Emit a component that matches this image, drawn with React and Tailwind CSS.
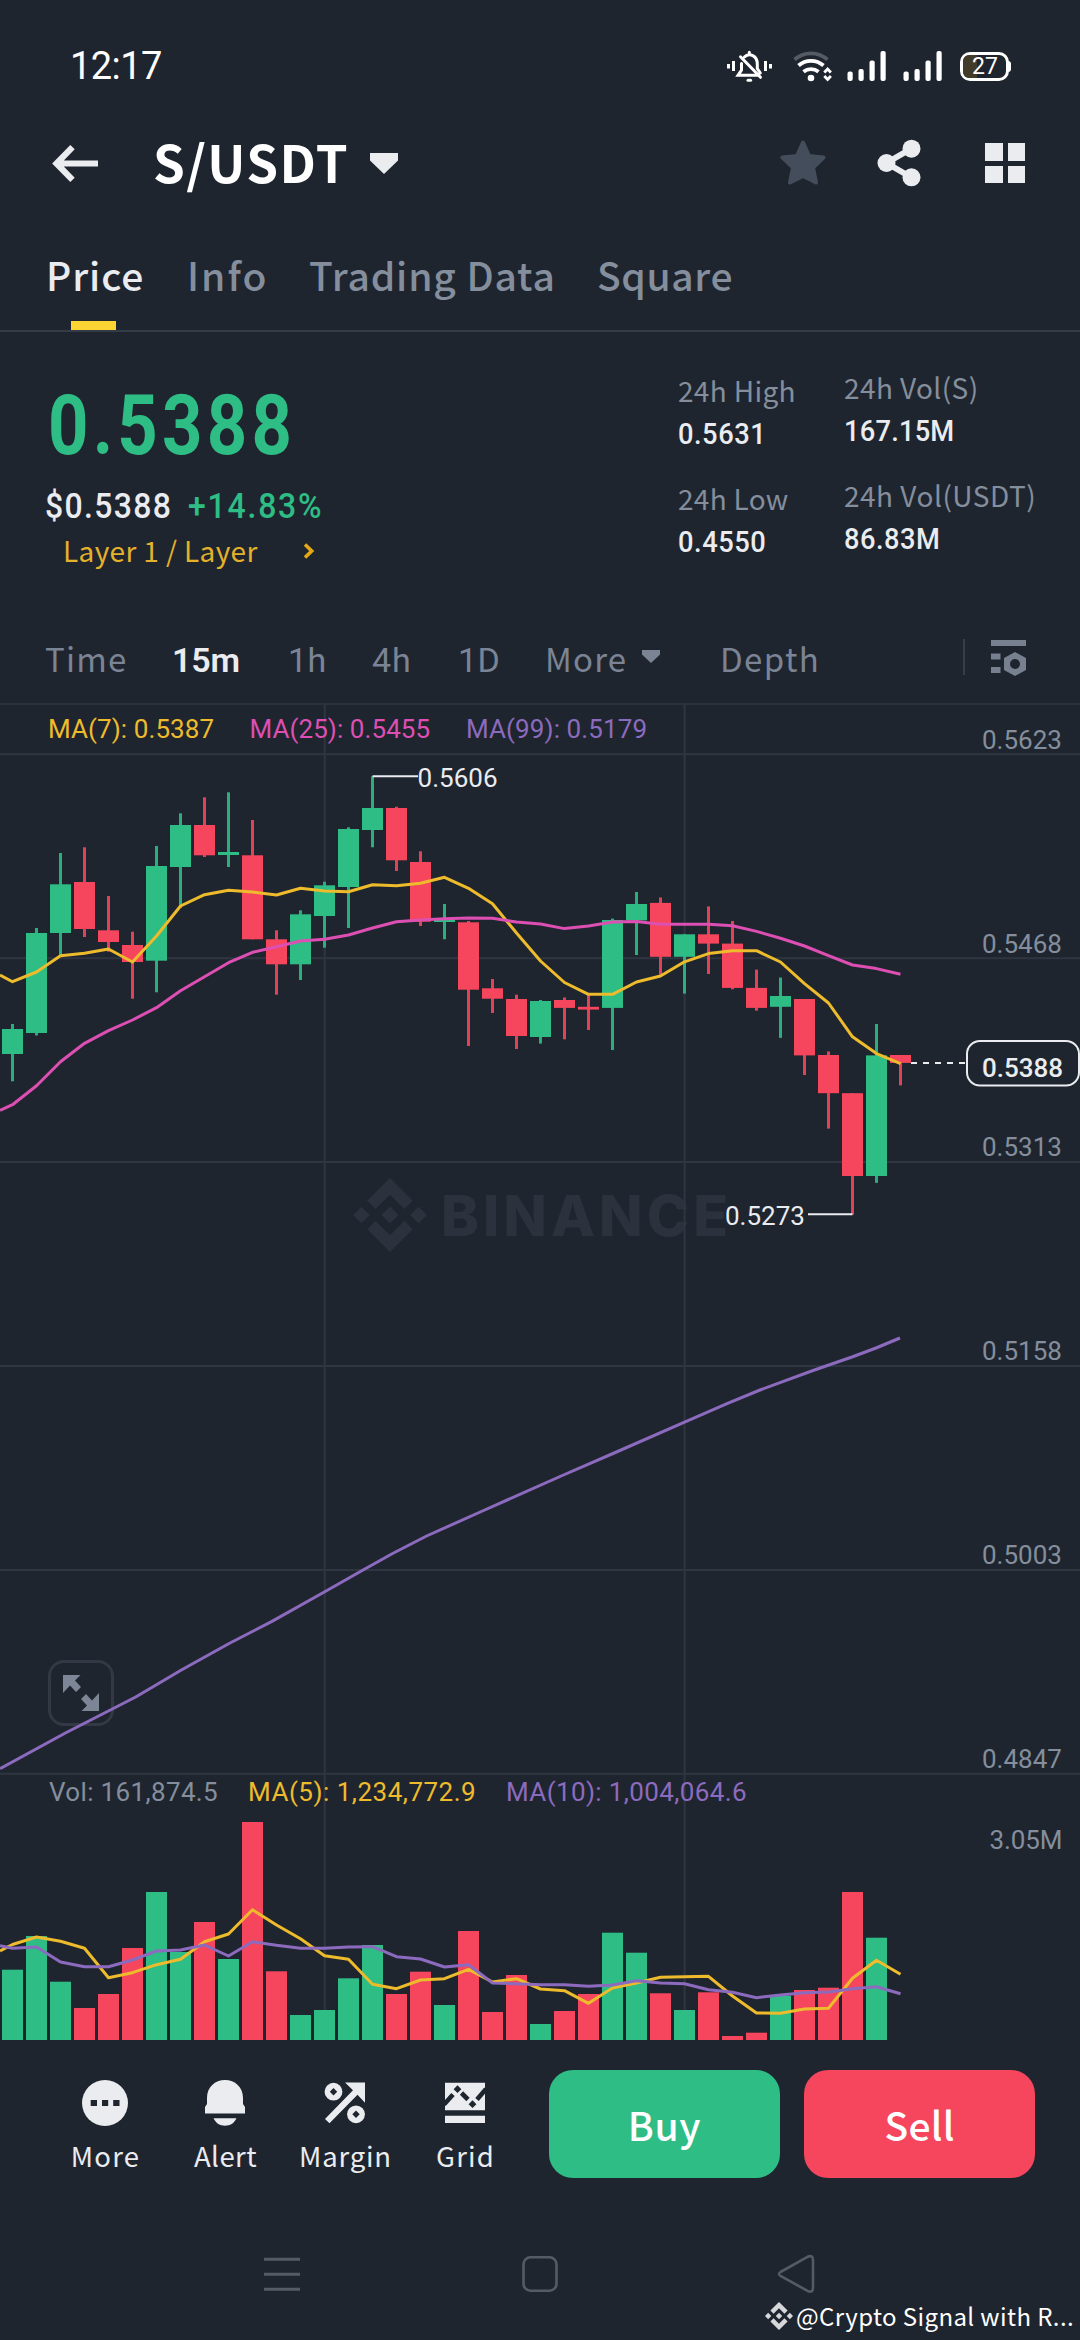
import React from "react";

const DIN = "font-['Roboto','Noto_Sans',sans-serif]";
const PLEX = "font-['Noto_Sans_CJK_SC','Noto_Sans',sans-serif]";

const UP = "#2ebd85";
const DOWN = "#f6465d";
const GOLD = "#eebb2c";
const PINK = "#dd4fb2";
const PURPLE = "#8c6bbf";

const STEP = 24;
const cx = (i) => 12.5 + STEP * i;

// [direction, body top, body bottom, wick top, wick bottom]
const candles = [
  [1, 1029, 1054, 1024, 1081.3], [1, 933, 1033, 928, 1035.5], [1, 884.3, 933, 853, 955.7], [0, 882, 929, 847.3, 937],
  [0, 930.3, 942, 896, 951.7], [0, 945, 962, 931.7, 998.7], [1, 866, 960.7, 846, 992.3], [1, 825, 867, 813.3, 908],
  [0, 825, 855.3, 797.3, 857], [1, 852, 855, 792.3, 867], [0, 855.3, 939.3, 820, 939.3], [0, 939.3, 964.3, 930.3, 994.7],
  [1, 914.3, 964.3, 910.3, 980], [1, 885.3, 916, 881.7, 947.7], [1, 829, 887, 827.3, 928], [1, 808, 830, 776.3, 847.3],
  [0, 808, 860.3, 806.7, 871], [0, 862, 921.7, 851.3, 926], [1, 919.7, 922, 904, 939.3], [0, 922.3, 989.7, 921, 1046],
  [0, 988.3, 998.7, 979, 1013], [0, 999, 1036, 994.7, 1049], [1, 1001, 1037, 1000, 1043.6], [0, 1000, 1007.9, 997.5, 1039.3],
  [0, 1006.8, 1009.6, 994.3, 1030], [1, 920, 1007.9, 918.6, 1050], [1, 904, 920.4, 892, 955], [0, 902.9, 956.8, 897.5, 974.6],
  [1, 934.3, 956.8, 934.3, 993.6], [0, 934.3, 943.6, 906.4, 974], [0, 943.6, 987.9, 921, 989.3], [0, 987.9, 1007.9, 969.6, 1010.7],
  [1, 996, 1006.8, 977.5, 1037.9], [0, 999, 1055.4, 999, 1075], [0, 1055, 1093.2, 1051.4, 1128.6], [0, 1093.2, 1176, 1093.2, 1214.6],
  [1, 1055.4, 1176, 1024, 1182.9], [0, 1055, 1062.9, 1055, 1085.4],
];

const volumes = [
  1969.7, 1936, 1981.7, 2008, 1994, 1948, 1892, 1952, 1922, 1959, 1822, 1971.3, 2015, 2010, 1978.3, 1945, 1994, 1971.7, 2005,
  1931, 2012, 1975, 2024, 2011, 1994, 1932.7, 1952.7, 1993.3, 2010, 1992.3, 2036, 2032.7, 1995.7, 1990, 1987.7, 1892, 1937.7,
];

const ma7 = [
  975, 981.7, 972, 955.7, 953.3, 949, 962, 936, 906, 894.7, 890.3, 892, 895, 888.3, 891, 891.7, 884.7, 885.7, 883.3, 877.3,
  888.3, 903.7, 933, 961, 982.5, 994.3, 994.3, 982, 976, 961.8, 953.6, 950.7, 950.7, 962, 983.6, 1003, 1036.8, 1053.6, 1063.6,
];
const ma25 = [
  1110.3, 1104.7, 1085.7, 1061.7, 1043.3, 1030.7, 1020, 1007.7, 990.7, 976.7, 962.7, 952.3, 946.7, 941, 939.3, 935, 928,
  921.7, 920, 918.7, 918, 918.3, 922, 924, 928.6, 926, 922, 921.4, 924.3, 924.3, 924.3, 925.7, 931.4, 938.2, 946, 955.7, 965,
  968.6, 974.3,
];
const vol5 = [
  1951, 1944.5, 1937, 1941.3, 1948.3, 1977.7, 1972.7, 1964.7, 1959.3, 1941.7, 1934, 1909.7, 1925, 1938.7, 1955.7, 1959.3,
  1984.3, 1988.7, 1980, 1978.7, 1969.3, 1982, 1978.7, 1989, 1990.7, 2003.3, 1988, 1983, 1977.3, 1976.7, 1976.3, 1996, 2013,
  2013.3, 2009, 2008.3, 1978.3, 1960.3, 1974.3,
];
const vol10 = [
  1945.7, 1948.3, 1947, 1962, 1966.7, 1966.7, 1960, 1951, 1950, 1945, 1956, 1941.7, 1945.3, 1948.3, 1948.3, 1947, 1946.7,
  1956.7, 1959, 1967, 1964.7, 1983, 1983.7, 1984.7, 1984.7, 1986.3, 1985, 1980.7, 1983, 1983.7, 1989.7, 1992.3, 1997.7, 1995,
  1992.7, 1992, 1988.7, 1986.7, 1993.7,
];
const ma99 =
  "0,1768.6 65.4,1733 135.7,1697 181.8,1669.8 230,1643 271.5,1621.6 324.3,1592 363.5,1569.8 392.6,1553.5 426.6,1536 484.7,1510 562.3,1475.5 613,1453.5 684,1422.4 727,1403.7 760,1390 813,1370.5 852,1357 876,1348 900,1338";

// The first value sits on the left edge; the rest sit on candle centres.
const toPoints = (values) => values.map((y, i) => `${i === 0 ? 0 : cx(i - 1)},${y}`).join(" ");

const gridRows = [
  [754.3, "0.5623"], [958.2, "0.5468"], [1162.1, "0.5313"], [1366, "0.5158"], [1570, "0.5003"], [1773.8, "0.4847"],
];

function Line({ points, color }) {
  return <polyline points={points} fill="none" stroke={color} strokeWidth="3" strokeLinejoin="round" />;
}

function BinanceMark({ className, fill }) {
  return (
    <svg viewBox="0 0 126.6 126.6" className={className} fill={fill} preserveAspectRatio="none">
      <path d="M38.7 53.2l24.6-24.6 24.6 24.6 14.3-14.3L63.3 0 24.4 38.9zM0 63.3l14.3-14.3 14.3 14.3-14.3 14.3zM38.7 73.4l24.6 24.6 24.6-24.6 14.3 14.3-38.9 38.9-38.9-38.9zM98 63.3l14.3-14.3 14.3 14.3-14.3 14.3zM77.8 63.3L63.3 48.8 48.8 63.3l14.5 14.5z" />
    </svg>
  );
}

function SignalBars() {
  return (
    <svg viewBox="0 0 40 32" className="h-8 w-10" fill="#fff">
      <rect x="0.5" y="21.5" width="5.2" height="9.5" rx="2" />
      <rect x="11.5" y="19" width="5.2" height="12" rx="2" />
      <rect x="22.5" y="10.5" width="5.2" height="20.5" rx="2" />
      <rect x="33.5" y="1" width="5.2" height="30" rx="2" />
    </svg>
  );
}

function StatusBar() {
  return (
    <div className="flex h-[132px] items-center pl-[70px]">
      <span className={`${DIN} w-[657px] text-[38px] leading-10 tracking-[-0.57px] text-white`}>12:17</span>
      <svg viewBox="0 0 45 32" className="mr-5 h-8 w-[45px]" fill="none" stroke="#fff" strokeWidth="3" strokeLinecap="round">
        <path d="M1.5 14v4.500M6.500 11v10M43.500 14v4.500M38.500 11v10" strokeLinecap="butt" />
        <path d="M14.500 13.500v6.500L11 25.300h20M17.500 6.800C22.500 2.500 30.300 5.500 30.300 14v4.500l3 4.500M22.300 2.300v1.500M13.500 6.800l20 20.500" />
        <path d="M21 30.200h2.600" />
      </svg>
      <svg viewBox="0 0 41 32" className="mr-3.5 h-8 w-[41px]" fill="none" stroke="#fff" strokeWidth="3.8">
        <path d="M2.500 9.500a25 25 0 0 1 33 0" stroke="#555b64" />
        <path d="M6.500 15.500a19 19 0 0 1 25 0M11.500 21.800a12 12 0 0 1 15 0" />
        <circle cx="19" cy="28" r="3.300" fill="#fff" stroke="none" />
        <path d="M32.300 22.500l3.300-3.500 3.300 3.500M32.300 26l3.300 3.500 3.300-3.500" strokeWidth="2.800" />
      </svg>
      <SignalBars />
      <div className="ml-4"><SignalBars /></div>
      <div className="relative ml-[17px] h-[29px] w-[49px] rounded-[10px] border-[3px] border-white">
        <div className="h-full w-[14px] rounded-l-[6px] bg-[#423b2a]" />
        <span className={`${DIN} absolute -top-0.5 left-[9px] text-[23px] leading-[27px] text-white`}>27</span>
        <div className="absolute top-[6px] -right-[5px] h-[11px] w-[3px] rounded-r-sm bg-white" />
      </div>
    </div>
  );
}

function Header() {
  return (
    <div className="flex h-[62px] items-center pl-[52px]">
      <svg viewBox="0 0 46 37" className="h-[37px] w-[46px]" fill="none" stroke="#eaecef" strokeWidth="6.200">
        <path d="M46 18.500H4M20.500 2.200L4.500 18.500l16 16.300" />
      </svg>
      <span className={`${PLEX} -mt-1 ml-[55px] w-[217px] text-[51px] leading-[60px] font-bold tracking-[1.4px] text-white`}>
        S/USDT
      </span>
      <svg viewBox="0 0 28 21" className="h-[21px] w-7" fill="#eaecef">
        <path d="M0 0h28v7.500L14 21 0 7.500z" />
      </svg>
      <svg viewBox="0 0 46 46" className="ml-[382px] h-[46px] w-[46px]">
        <path
          d="M23 2.500l6 13.500 14.500 1.500L33 27.500l3 15L23 36l-13 6.500 3-15L2.500 17.500 17 16z"
          fill="#444d5b" stroke="#444d5b" strokeWidth="4" strokeLinejoin="round"
        />
      </svg>
      <svg viewBox="0 0 44 48" className="ml-[51px] h-12 w-11" fill="#eaecef">
        <path d="M34.500 9.500L9.500 24l25 14.500" fill="none" stroke="#eaecef" strokeWidth="6" />
        <circle cx="9.500" cy="24" r="9" /><circle cx="34.500" cy="9.700" r="9" /><circle cx="34.500" cy="38.300" r="9" />
      </svg>
      <div className="ml-[64px] grid h-10 w-10 grid-cols-2 gap-[5px]">
        <div className="bg-[#eaecef]" /><div className="bg-[#eaecef]" /><div className="bg-[#eaecef]" /><div className="bg-[#eaecef]" />
      </div>
    </div>
  );
}

function Tabs() {
  return (
    <div className={`${PLEX} relative flex h-[138px] border-b-2 border-[#333b46] pt-[60px] pl-[46px] text-[39px] leading-10 font-medium text-[#848e9c]`}>
      <span className="w-[141px] tracking-[0.9px] text-[#eaecef]">Price</span>
      <span className="w-[122px] tracking-[2px]">Info</span>
      <span className="w-[288px] tracking-[0.85px]">Trading Data</span>
      <span className="tracking-[0.6px]">Square</span>
      <div className="absolute bottom-0 left-[71px] h-[9px] w-[45px] bg-[#fcd535]" />
    </div>
  );
}

function Stat({ label, labelClass, value, valueClass }) {
  return (
    <div className="flex flex-col gap-1">
      <span className={`${PLEX} text-[28px] leading-10 whitespace-nowrap text-[#848e9c] ${labelClass}`}>{label}</span>
      <span className={`${DIN} origin-left scale-x-[0.94] text-[29px] leading-10 font-medium text-[#eaecef] ${valueClass}`}>{value}</span>
    </div>
  );
}

function Summary() {
  return (
    <div className="flex h-[282px]">
      <div className="w-[678px] pt-[52px]">
        <div className={`${DIN} ml-[48px] w-[300px] origin-left scale-x-[0.84] text-[84px] leading-[84px] font-bold tracking-[5px] text-[#2ebd85]`}>
          0.5388
        </div>
        <div className={`${DIN} mt-[18px] ml-[45px] flex text-[35.5px] leading-10 font-medium`}>
          <span className="w-[143px] origin-left scale-x-90 tracking-[1.5px] text-[#eaecef]">$0.5388</span>
          <span className="origin-left scale-x-90 tracking-[2px] text-[#2ebd85]">+14.83%</span>
        </div>
        <div className="mt-2 ml-[63px] flex items-center">
          <span className={`${PLEX} w-[240px] text-[28px] leading-8 tracking-[0.38px] text-[#e4b12b]`}>Layer 1 / Layer</span>
          <svg viewBox="0 0 12 16" className="mt-0.5 h-4 w-3" fill="none" stroke="#e4a815" strokeWidth="3.600">
            <path d="M2 1.500L8.700 8 2 14.500" />
          </svg>
        </div>
      </div>
      <div className="flex w-[166px] flex-col gap-6 pt-[38px]">
        <Stat label="24h High" labelClass="tracking-[0.33px]" value="0.5631" valueClass="tracking-[0.56px]" />
        <Stat label="24h Low" labelClass="tracking-[0.3px]" value="0.4550" valueClass="tracking-[0.59px]" />
      </div>
      <div className="flex flex-col gap-6 pt-[35px]">
        <Stat label="24h Vol(S)" labelClass="tracking-[0.4px]" value="167.15M" valueClass="tracking-[0.23px]" />
        <Stat label="24h Vol(USDT)" labelClass="tracking-[0.5px]" value="86.83M" valueClass="tracking-[0.54px]" />
      </div>
    </div>
  );
}

function Intervals() {
  return (
    <div className="flex h-[91px] items-baseline border-b-2 border-[#2b323c] pt-6 pl-[45px] leading-10 text-[#7b8494]">
      <span className={`${PLEX} w-[127px] text-[33px] leading-10 tracking-[1.2px]`}>Time</span>
      <span className={`${DIN} w-[116px] text-[34px] leading-10 font-semibold tracking-[-0.22px] text-[#eaecef]`}>15m</span>
      <span className={`${DIN} w-[84px] text-[34px] leading-10 tracking-[0.3px]`}>1h</span>
      <span className={`${DIN} w-[86px] text-[34px] leading-10 tracking-[0.9px]`}>4h</span>
      <span className={`${DIN} w-[87px] text-[34px] leading-10 tracking-[0.5px]`}>1D</span>
      <span className={`${PLEX} w-[97px] text-[33px] leading-10 tracking-[1.2px]`}>More</span>
      <svg viewBox="0 0 18 13" className="mt-3 h-[13px] w-[18px] self-start" fill="#7b8494">
        <path d="M0 0h18v4.500L9 13 0 4.500z" />
      </svg>
      <span className={`${PLEX} ml-[60px] w-[243px] text-[33px] leading-10 tracking-[1.4px]`}>Depth</span>
      <div className="mt-px h-9 w-0.5 self-start bg-[#373e49]" />
      <svg viewBox="0 0 35 37" className="mt-0.5 ml-[26px] h-[37px] w-[35px] self-start" fill="#76808f">
        <rect width="35" height="6" />
        <rect y="13.500" width="9.500" height="6" />
        <rect y="27" width="9.500" height="6" />
        <path fillRule="evenodd" d="M24 12l11 6v12l-11 6-11-6V18zM24 19a5 5 0 1 0 0 10 5 5 0 0 0 0-10z" />
      </svg>
    </div>
  );
}

function Chart() {
  return (
    <div className="relative h-[1345px]">
      <div className="absolute top-[955px] left-[48px] h-[66px] w-[66px] rounded-[16px] border-[3px] border-[#323944]">
        <svg viewBox="0 0 36 36" className="absolute top-[12px] left-[12px] h-9 w-9" fill="#7d8696">
          <path d="M0 0h17.500l-5.500 5.500 6 6.500-5 5-6-6.500L0 18z" />
          <path d="M36 36H18.500l5.500-5.500-6-6.500 5-5 6 6.500L36 18z" />
        </svg>
      </div>
      <svg viewBox="0 705 1080 1345" className="absolute inset-0 h-[1345px] w-[1080px] font-['Roboto','Noto_Sans',sans-serif] text-[26px]">
        <g fill="#2c323d" stroke="none">
          <svg x="353" y="1177" width="74" height="76" viewBox="0 0 126.600 126.600">
            <path d="M38.700 53.200l24.600-24.600 24.600 24.600 14.300-14.300L63.300 0 24.400 38.900zM0 63.300l14.300-14.300 14.300 14.300-14.300 14.300zM38.700 73.400l24.600 24.600 24.600-24.600 14.300 14.300-38.900 38.900-38.900-38.900zM98 63.300l14.300-14.300 14.300 14.300-14.300 14.300zM77.800 63.300L63.300 48.800 48.800 63.300l14.500 14.500z" />
          </svg>
          <text x="441" y="1235.500" className="font-['Inter',sans-serif] text-[57px] font-extrabold" textLength="287" lengthAdjust="spacing">
            BINANCE
          </text>
        </g>
        <g stroke="#2f3641" strokeWidth="2">
          {gridRows.map(([y]) => <path key={y} d={`M0 ${y}H1080`} />)}
          <path d="M324.700 705V2040M684.600 705V2040" />
        </g>
        {candles.map(([up, top, bottom, high, low], i) => (
          <g key={i} fill={up ? UP : DOWN}>
            <rect x={cx(i) - 1.5} y={high} width="3" height={low - high} opacity="0.9" />
            <rect x={cx(i) - 10.5} y={top} width="21" height={bottom - top} />
          </g>
        ))}
        {volumes.map((y, i) => (
          <rect key={i} x={cx(i) - 10.5} y={y} width="21" height={2040 - y} fill={candles[i][0] ? UP : DOWN} />
        ))}
        <Line points={toPoints(ma7)} color={GOLD} />
        <Line points={toPoints(ma25)} color={PINK} />
        <Line points={ma99} color={PURPLE} />
        <Line points={toPoints(vol5)} color={GOLD} />
        <Line points={toPoints(vol10)} color={PURPLE} />
        <text x="48" y="737.500" fill={GOLD} letterSpacing="0.08">MA(7): 0.5387</text>
        <text x="249.500" y="737.500" fill={PINK} letterSpacing="0.07">MA(25): 0.5455</text>
        <text x="466" y="737.500" fill={PURPLE} letterSpacing="0.1">MA(99): 0.5179</text>
        <text x="49" y="1801" fill="#848e9c" letterSpacing="0.35">Vol: 161,874.5</text>
        <text x="248" y="1801" fill={GOLD} letterSpacing="0.5">MA(5): 1,234,772.9</text>
        <text x="506" y="1801" fill={PURPLE} letterSpacing="0.38">MA(10): 1,004,064.6</text>
        {gridRows.map(([y, label]) => (
          <text key={label} x="982" y={y - 5.7} fill="#848e9c">{label}</text>
        ))}
        <text x="989.500" y="1848.700" fill="#848e9c" letterSpacing="-0.1">3.05M</text>
        <g fill="#eaecef">
          <path d="M372.500 776.300H418M808 1214.300h44.500" stroke="#eaecef" strokeWidth="2" />
          <text x="417.600" y="787">0.5606</text>
          <text x="725" y="1225">0.5273</text>
          <path d="M911 1063h56" stroke="#eaecef" strokeWidth="2" strokeDasharray="6 6" />
          <rect x="967" y="1041" width="112" height="44.500" rx="13" fill="#1f252f" stroke="#eaecef" strokeWidth="2" />
          <text x="982" y="1076.500" className="font-medium">0.5388</text>
        </g>
      </svg>
    </div>
  );
}

const ICONS = {
  More: (
    <>
      <circle cx="24" cy="24" r="23" />
      <path d="M9.700 21H16v6H9.700zM21 21h6.200v6H21zM32.200 21h6.300v6h-6.300z" fill="#1f252f" />
    </>
  ),
  Alert: (
    <>
      <path d="M4 34.500V28l2-3V19C6 8 14 1 24 1s18 7 18 18v6l2 3v6.500z" />
      <path d="M12.500 39.300h23C33 44.500 29 46.700 24 46.700s-9-2.200-11.500-7.400z" />
    </>
  ),
  Margin: (
    <>
      <path d="M24 3.500h20v20.300l-7.500-8L8.500 44.300 4 40 32 11.300z" />
      <circle cx="12.500" cy="12.700" r="8.900" /><circle cx="35" cy="35.300" r="8.900" />
      <path d="M12.500 9l3.700 3.700-3.700 3.700-3.700-3.700zM35 31.600l3.700 3.700L35 39l-3.700-3.700z" fill="#1f252f" />
    </>
  ),
  Grid: (
    <>
      <path d="M4 3.700h40V31.300H4zM4 36.800h40v7.200H4z" />
      <path d="M3 25.500L12 15.500M20.500 14l6.500 6.500M36 20.500L45 10" stroke="#1f252f" strokeWidth="4.600" />
      <path d="M16.500 6.300l3.900 3.900-3.900 3.900-3.900-3.900zM31.500 21.300l3.900 3.900-3.900 3.900-3.900-3.900z" fill="#1f252f" />
    </>
  ),
};

const actions = [
  ["More", "tracking-[1.2px]"],
  ["Alert", "tracking-[0.47px]"],
  ["Margin", "tracking-[0.8px]"],
  ["Grid", "tracking-[1.2px]"],
];

function BottomBar() {
  return (
    <div className="flex h-[150px] pl-[45px]">
      {actions.map(([name, tracking]) => (
        <div key={name} className="flex w-[120px] flex-col items-center gap-2.5 pt-[29px]">
          <svg viewBox="0 0 48 48" className="h-12 w-12" fill="#eaecef">{ICONS[name]}</svg>
          <span className={`${PLEX} pl-px text-[27.5px] leading-9 text-[#eaecef] ${tracking}`}>{name}</span>
        </div>
      ))}
      <button className={`${PLEX} mt-5 ml-6 h-[108px] w-[231px] rounded-[24px] bg-[#2ebd85] text-[39px] font-medium tracking-[0.65px] text-white`}>
        Buy
      </button>
      <button className={`${PLEX} mt-5 ml-6 h-[108px] w-[231px] rounded-[24px] bg-[#f6465d] text-[39px] font-medium tracking-[0.3px] text-white`}>
        Sell
      </button>
    </div>
  );
}

function SystemNav() {
  return (
    <div className="relative flex h-[140px] pt-[54px] pl-[264px]">
      <svg viewBox="0 0 36 40" className="h-10 w-9" stroke="#555b64" strokeWidth="3">
        <path d="M0 5.300h36M0 20.300h36M0 35.300h36" />
      </svg>
      <svg viewBox="0 0 36 40" className="ml-[222px] h-10 w-9" fill="none" stroke="#555b64" strokeWidth="2.600">
        <rect x="1.500" y="3.300" width="33" height="33.400" rx="7" />
      </svg>
      <svg viewBox="0 0 38 40" className="ml-[219px] h-10 w-[38px]" fill="none" stroke="#555b64" strokeWidth="2.600">
        <path d="M3.500 18L30.500 2.800Q36 0.500 36 6V33.500Q36 39.500 30.500 36.800L3.500 22Q0.500 20 3.500 18z" />
      </svg>
      <div className="absolute top-[100px] left-[765px] flex h-8 items-center">
        <BinanceMark className="h-7 w-7" fill="#d6d8da" />
        <span className={`${PLEX} ml-[3px] text-[24px] leading-8 tracking-[0.4px] whitespace-nowrap text-white`}>
          @Crypto Signal with R...
        </span>
      </div>
    </div>
  );
}

export default function App() {
  return (
    <div className="h-[2340px] w-[1080px] overflow-hidden bg-[#1f252f]">
      <StatusBar />
      <Header />
      <Tabs />
      <Summary />
      <Intervals />
      <Chart />
      <BottomBar />
      <SystemNav />
    </div>
  );
}
